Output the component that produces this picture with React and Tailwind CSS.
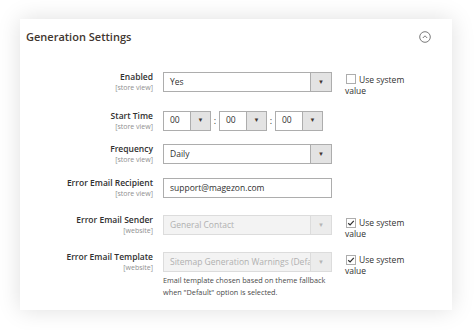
import React from "react";

// Small dropdown arrow used in select boxes
function Arrow({ disabled }) {
    return (
        <span className={disabled ? "text-[#b5b5b5] text-[6px]" : "text-[#41362f] text-[6px]"}>▼</span>
    );
}

function Select({ value, width = "w-[169px]", arrowWidth = "w-[21px]", disabled = false }) {
    return (
        <div className={`${width} h-[20px] flex border ${disabled ? "border-[#dcdcdc] bg-[#f3f3f3]" : "border-[#adadad] bg-white"}`}>
            <div className={`flex-1 min-w-0 pl-[6px] flex items-center text-[8.5px] whitespace-nowrap overflow-hidden ${disabled ? "text-[#b0b0b0]" : "text-[#303030]"}`}>
                {value}
            </div>
            <div className={`${arrowWidth} flex items-center justify-center border-l ${disabled ? "border-[#dcdcdc] bg-[#ececec]" : "border-[#adadad] bg-[#e3e3e3]"}`}>
                <Arrow disabled={disabled} />
            </div>
        </div>
    );
}

function SystemValue({ checked }) {
    return (
        <div className="mt-[2px] w-[60px] text-[8.5px] leading-[11px] text-[#303030]">
            <span className="inline-flex align-[-1px] w-[10px] h-[10px] mr-[3px] ml-[1px] border border-[#adadad] bg-white items-center justify-center">
                {checked && (
                    <svg width="8" height="8" viewBox="0 0 8 8">
                        <path d="M1.2 4.2 L3.1 6 L6.8 1.8" fill="none" stroke="#303030" strokeWidth="1.2" />
                    </svg>
                )}
            </span>
            Use system value
        </div>
    );
}

function Row({ label, scope, height, children, system }) {
    return (
        <div className={`flex items-start ${height}`}>
            <div className="w-[133px] text-right mt-[-1px]">
                <div className="text-[8.5px] font-semibold leading-[12px] text-[#303030]">{label}</div>
                <div className="text-[7px] leading-[9px] text-[#8f8f8f]">{scope}</div>
            </div>
            <div className="ml-[10px] w-[169px]">{children}</div>
            {system !== undefined && (
                <div className="ml-[13px]">
                    <SystemValue checked={system} />
                </div>
            )}
        </div>
    );
}

export default function App() {
    return (
        <div className="w-[474px] h-[330px] bg-white pt-[19px] pl-[20px] overflow-hidden" style={{ fontFamily: "'Open Sans', 'Liberation Sans', sans-serif" }}>
            <div className="w-[432px] h-[291px] bg-white shadow-[0_0_22px_rgba(0,0,0,0.13)]">
                {/* Header */}
                <div className="h-[53px] flex items-start justify-between pl-[6px] pr-[21px] pt-[9px]">
                    <h2 className="text-[11px] font-semibold leading-[18px] text-[#41362f]">Generation Settings</h2>
                    <svg className="mt-[3px]" width="12" height="12" viewBox="0 0 12 12">
                        <circle cx="6" cy="6" r="5.3" fill="none" stroke="#6b6b6b" strokeWidth="0.9" />
                        <path d="M3.8 7 L6 4.8 L8.2 7" fill="none" stroke="#6b6b6b" strokeWidth="0.9" />
                    </svg>
                </div>

                {/* Form rows */}
                <Row label="Enabled" scope="[store view]" height="h-[39px]" system={false}>
                    <Select value="Yes" />
                </Row>
                <Row label="Start Time" scope="[store view]" height="h-[33px]">
                    <div className="flex items-center h-[19px]">
                        <Select value="00" width="w-[48px]" arrowWidth="w-[20px]" />
                        <span className="w-[8px] text-center text-[9px] text-[#303030]">:</span>
                        <Select value="00" width="w-[48px]" arrowWidth="w-[20px]" />
                        <span className="w-[8px] text-center text-[9px] text-[#303030]">:</span>
                        <Select value="00" width="w-[48px]" arrowWidth="w-[20px]" />
                    </div>
                </Row>
                <Row label="Frequency" scope="[store view]" height="h-[34px]">
                    <Select value="Daily" />
                </Row>
                <Row label="Error Email Recipient" scope="[store view]" height="h-[37px]">
                    <div className="w-[169px] h-[20px] border border-[#adadad] pl-[6px] flex items-center text-[8.5px] text-[#303030]">
                        support@magezon.com
                    </div>
                </Row>
                <Row label="Error Email Sender" scope="[website]" height="h-[37px]" system={true}>
                    <Select value="General Contact" disabled />
                </Row>
                <Row label="Error Email Template" scope="[website]" height="h-[50px]" system={true}>
                    <Select value="Sitemap Generation Warnings (Default)" disabled />
                    <p className="mt-[2px] text-[7.3px] leading-[12px] text-[#4a4a4a]">
                        Email template chosen based on theme fallback when "Default" option is selected.
                    </p>
                </Row>
            </div>
        </div>
    );
}
